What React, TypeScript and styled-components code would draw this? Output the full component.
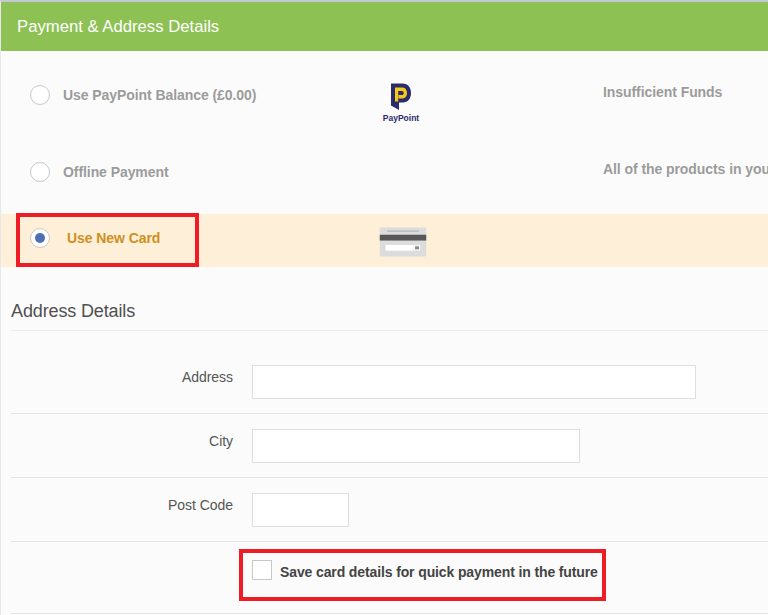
import React from "react";
import styled, { createGlobalStyle } from "styled-components";

const GlobalStyle = createGlobalStyle`
  html, body {
    margin: 0;
    padding: 0;
    background: #fbfbfb;
    font-family: "Liberation Sans", Arial, sans-serif;
  }
`;

const Page = styled.div`
  width: 768px;
  height: 615px;
  overflow: hidden;
  box-sizing: border-box;
  border-top: 2px solid #c3c9d3;
  border-left: 1px solid #e6e8ee;
  background: #fbfbfb;
`;

const Header = styled.div`
  height: 49px;
  padding-left: 16px;
  display: flex;
  align-items: center;
  background: #8dc153;
  color: #fff;
  font-size: 16.7px;
`;

const Options = styled.div`
  padding-top: 5px;
  display: flex;
  flex-direction: column;
`;

const OptionRow = styled.div<{ $selected?: boolean }>`
  position: relative;
  display: grid;
  grid-template-columns: 62px 319px 221px 1fr;
  align-items: center;
  height: ${(p) => (p.$selected ? "53px" : "77px")};
  margin-top: ${(p) => (p.$selected ? "4px" : "0")};
  background: ${(p) => (p.$selected ? "#feefd8" : "transparent")};
`;

const Radio = styled.span<{ $checked?: boolean }>`
  justify-self: start;
  margin-left: 29px;
  margin-top: ${(p) => (p.$checked ? "-6px" : "0")};
  box-sizing: border-box;
  width: 20px;
  height: 20px;
  border-radius: 50%;
  border: 1px solid #c8c8c8;
  background: #fff;
  display: flex;
  align-items: center;
  justify-content: center;
  &::after {
    content: "";
    display: ${(p) => (p.$checked ? "block" : "none")};
    width: 10px;
    height: 10px;
    border-radius: 50%;
    background: #4a6fb5;
  }
`;

const OptionLabel = styled.span<{ $selected?: boolean }>`
  font-size: 14px;
  font-weight: 700;
  letter-spacing: -0.07px;
  white-space: nowrap;
  color: ${(p) => (p.$selected ? "#cf8f1e" : "#9b9b9b")};
  padding-left: ${(p) => (p.$selected ? "4px" : "0")};
  margin-top: ${(p) => (p.$selected ? "-5px" : "0")};
`;

const CardLogo = styled.div`
  display: flex;
  margin-left: -3px;
  margin-top: 2px;
`;

const LogoStack = styled.div`
  display: flex;
  flex-direction: column;
  align-items: center;
  width: 38px;
  gap: 2px;
  margin-top: 16px;
`;

const LogoText = styled.span`
  font-size: 8.5px;
  font-weight: 700;
  line-height: 10px;
  color: #2b2a6b;
`;

const OptionNote = styled.span`
  font-size: 14px;
  font-weight: 700;
  letter-spacing: -0.07px;
  color: #9b9b9b;
  white-space: nowrap;
  margin-top: -5px;
`;

const Highlight = styled.div`
  position: absolute;
  left: 15px;
  top: -1px;
  width: 183px;
  height: 54px;
  box-sizing: border-box;
  border: 4px solid #ee1c25;
`;

const SectionTitle = styled.h2`
  margin: 34px 0 0 10px;
  padding-bottom: 9px;
  border-bottom: 1px solid #ececec;
  font-size: 18px;
  font-weight: 400;
  letter-spacing: -0.13px;
  line-height: 20px;
  color: #505050;
`;

const FormList = styled.div`
  margin-left: 10px;
  padding-top: 19px;
`;

const FormRow = styled.div`
  display: grid;
  grid-template-columns: 222px 1fr;
  column-gap: 19px;
  align-items: start;
  padding: 15px 0 14px;
  border-bottom: 1px solid #e6e6e6;
`;

const FieldLabel = styled.label`
  text-align: right;
  font-size: 14px;
  letter-spacing: -0.05px;
  line-height: 16px;
  padding-top: 4px;
  color: #555;
`;

const TextInput = styled.input<{ $width: number }>`
  box-sizing: border-box;
  width: ${(p) => p.$width}px;
  height: 34px;
  border: 1px solid #dedede;
  background: #fff;
  display: block;
  outline: none;
`;

const SaveRow = styled.div`
  padding: 7px 0 12px 228px;
  border-bottom: 1px solid #e6e6e6;
`;

const SaveBox = styled.div`
  box-sizing: border-box;
  width: 367px;
  height: 52px;
  border: 4px solid #ee1c25;
  padding: 7px 0 0 9px;
  display: flex;
  align-items: flex-start;
  gap: 8px;
`;

const Checkbox = styled.span`
  box-sizing: border-box;
  width: 20px;
  height: 20px;
  flex: none;
  border: 1px solid #c8c8c8;
  background: #fff;
`;

const SaveText = styled.span`
  font-size: 14px;
  font-weight: 700;
  letter-spacing: -0.12px;
  line-height: 20px;
  padding-top: 2px;
  color: #444;
  white-space: nowrap;
`;

const PayPointMark = () => (
  <svg width="22" height="29" viewBox="0 0 22 28">
    <path
      d="M1 1h11.5C18 1 21 5 21 10.5S18 20 13 20H9v7.5L1 23z"
      fill="#2b2a6b"
    />
    <path
      d="M5 5h7c3.2 0 5 2.2 5 5.5S15.2 16 12 16H8.5v-3.4H12c1 0 1.7-.9 1.7-2.1S13 8.4 12 8.4H8.2V19H5z"
      fill="#f5c91a"
    />
  </svg>
);

const CardImage = () => (
  <svg width="48" height="30" viewBox="0 0 49 31">
    <rect x="0.5" y="0.5" width="48" height="30" rx="1.5" fill="#dcdcdc" />
    <rect x="8" y="3.5" width="33" height="1.6" fill="#bdbdbd" />
    <rect x="0.5" y="8" width="48" height="6" fill="#575757" />
    <rect x="6.5" y="18.5" width="29" height="6" fill="#fff" />
    <rect x="35.5" y="18.5" width="7" height="6" fill="#f4f4f4" />
    <rect x="37" y="20" width="4" height="3" fill="#888" />
  </svg>
);

export default function App() {
  return (
    <>
      <GlobalStyle />
      <Page>
        <Header>Payment &amp; Address Details</Header>
        <Options>
          <OptionRow>
            <Radio />
            <OptionLabel>Use PayPoint Balance (£0.00)</OptionLabel>
            <LogoStack>
              <PayPointMark />
              <LogoText>PayPoint</LogoText>
            </LogoStack>
            <OptionNote>Insufficient Funds</OptionNote>
          </OptionRow>
          <OptionRow>
            <Radio />
            <OptionLabel>Offline Payment</OptionLabel>
            <span />
            <OptionNote>All of the products in you</OptionNote>
          </OptionRow>
          <OptionRow $selected>
            <Radio $checked />
            <OptionLabel $selected>Use New Card</OptionLabel>
            <CardLogo>
              <CardImage />
            </CardLogo>
            <span />
            <Highlight />
          </OptionRow>
        </Options>
        <SectionTitle>Address Details</SectionTitle>
        <FormList>
          <FormRow>
            <FieldLabel>Address</FieldLabel>
            <TextInput $width={444} />
          </FormRow>
          <FormRow>
            <FieldLabel>City</FieldLabel>
            <TextInput $width={328} />
          </FormRow>
          <FormRow>
            <FieldLabel>Post Code</FieldLabel>
            <TextInput $width={97} />
          </FormRow>
          <SaveRow>
            <SaveBox>
              <Checkbox />
              <SaveText>Save card details for quick payment in the future</SaveText>
            </SaveBox>
          </SaveRow>
        </FormList>
      </Page>
    </>
  );
}
